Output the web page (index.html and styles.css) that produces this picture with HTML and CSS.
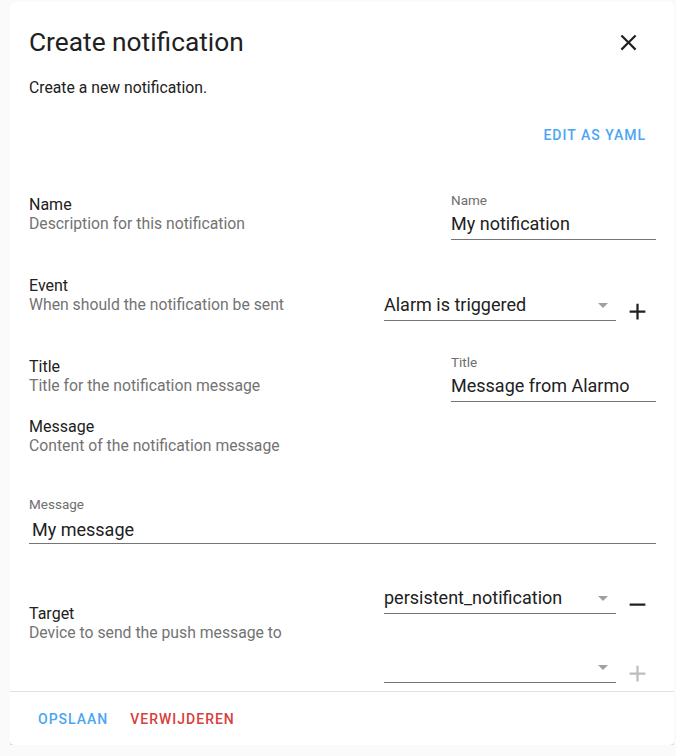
FILE: index.html
```html
<!DOCTYPE html>
<html lang="en">
<head>
  <meta charset="UTF-8">
  <title>Create notification</title>
  <link rel="stylesheet" href="styles.css">
</head>
<body>
<div class="dialog">
  <div class="dialog-header">
    <h2 class="dialog-title">Create notification</h2>
    <button class="icon-btn close-btn" aria-label="Close">
      <svg viewBox="0 0 24 24" width="27" height="27"><path d="M19,6.41L17.59,5L12,10.59L6.41,5L5,6.41L10.59,12L5,17.59L6.41,19L12,13.41L17.59,19L19,17.59L13.41,12L19,6.41Z"/></svg>
    </button>
  </div>

  <div class="dialog-body">
    <p class="intro">Create a new notification.</p>

    <div class="yaml-bar">
      <button class="text-btn primary">Edit as YAML</button>
    </div>

    <!-- Name -->
    <div class="setting-row">
      <div class="info">
        <div class="info-name">Name</div>
        <div class="info-desc">Description for this notification</div>
      </div>
      <div class="textfield">
        <span class="tf-label">Name</span>
        <span class="tf-value">My notification</span>
      </div>
    </div>

    <!-- Event -->
    <div class="setting-row event-row">
      <div class="info">
        <div class="info-name">Event</div>
        <div class="info-desc">When should the notification be sent</div>
      </div>
      <div class="select-line">
        <div class="select">
          <span class="select-value">Alarm is triggered</span>
          <span class="arrow"></span>
        </div>
        <span class="line-icon">
          <svg viewBox="0 0 24 24" width="27" height="27"><path d="M19,13H13V19H11V13H5V11H11V5H13V11H19V13Z"/></svg>
        </span>
      </div>
    </div>

    <!-- Title -->
    <div class="setting-row title-row">
      <div class="info">
        <div class="info-name">Title</div>
        <div class="info-desc">Title for the notification message</div>
      </div>
      <div class="textfield">
        <span class="tf-label">Title</span>
        <span class="tf-value">Message from Alarmo</span>
      </div>
    </div>

    <!-- Message -->
    <div class="setting-row message-row">
      <div class="info">
        <div class="info-name">Message</div>
        <div class="info-desc">Content of the notification message</div>
      </div>
    </div>

    <div class="textfield textarea">
      <span class="tf-label">Message</span>
      <span class="tf-value">My message</span>
    </div>

    <!-- Target -->
    <div class="setting-row target-row">
      <div class="info">
        <div class="info-name">Target</div>
        <div class="info-desc">Device to send the push message to</div>
      </div>
      <div class="select-list">
        <div class="select-line">
          <div class="select">
            <span class="select-value">persistent_notification</span>
            <span class="arrow"></span>
          </div>
          <span class="line-icon minus">
            <svg viewBox="0 0 24 24" width="27" height="27"><path d="M19,13H5V11H19V13Z"/></svg>
          </span>
        </div>
        <div class="select-line">
          <div class="select">
            <span class="select-value"></span>
            <span class="arrow"></span>
          </div>
          <span class="line-icon disabled">
            <svg viewBox="0 0 24 24" width="27" height="27"><path d="M19,13H13V19H11V13H5V11H11V5H13V11H19V13Z"/></svg>
          </span>
        </div>
      </div>
    </div>
  </div>

  <div class="dialog-footer">
    <button class="text-btn primary">Opslaan</button>
    <button class="text-btn danger">Verwijderen</button>
  </div>
</div>
</body>
</html>
```

FILE: styles.css
```css
html, body {
  background: #fafafa;
}

body {
  margin: 2px 2px 0 10px;
  font-family: Roboto, "Liberation Sans", sans-serif;
  color: #212121;
}

button {
  font-family: inherit;
  background: none;
  border: none;
  padding: 0;
  cursor: pointer;
}

.dialog {
  width: 664px;
  height: 743px;
  background: #fff;
  border-radius: 4px;
  box-shadow: 0 2px 2px rgba(0, 0, 0, 0.14), 0 1px 5px rgba(0, 0, 0, 0.12), 0 3px 1px -2px rgba(0, 0, 0, 0.2);
  display: flex;
  flex-direction: column;
  overflow: hidden;
}

.dialog-header {
  display: flex;
  align-items: center;
  height: 48px;
  padding: 16px 22px 0 19px;
}

.dialog-title {
  flex: 1;
  margin: 0;
  font-size: 26.3px;
  font-weight: 400;
  line-height: 32px;
  color: #212121;
}

.icon-btn {
  width: 48px;
  height: 48px;
  display: flex;
  align-items: center;
  justify-content: center;
}

.icon-btn svg {
  fill: #212121;
}

.dialog-body {
  flex: 1;
  padding: 0 18px 0 19px;
}

.intro {
  margin: 12px 0 0;
  font-size: 15.75px;
  line-height: 20px;
  color: #212121;
}

.yaml-bar {
  display: flex;
  justify-content: flex-end;
  margin-top: 19px;
  padding-right: 2px;
}

.text-btn {
  height: 36px;
  padding: 0 8px;
  font-size: 14px;
  font-weight: 500;
  letter-spacing: 1px;
  text-transform: uppercase;
}

.text-btn.primary {
  color: #4aa6f3;
}

.text-btn.danger {
  color: #d8403c;
}

/* settings rows */
.setting-row {
  display: flex;
  justify-content: space-between;
  align-items: flex-start;
  margin-top: 39px;
}

.info {
  margin-top: 3px;
}

.info-name {
  font-size: 16px;
  line-height: 20px;
  color: #212121;
}

.info-desc {
  font-size: 15.75px;
  line-height: 18px;
  color: #737373;
}

.event-row {
  margin-top: 35px;
}

.event-row .info {
  margin-top: 1px;
}

.event-row .select-line {
  margin-top: 6px;
}

.title-row {
  margin-top: 33px;
}

.message-row {
  margin-top: 14px;
}

.message-row .info {
  margin-top: 1px;
}

.target-row {
  margin-top: 30px;
}

.target-row .info {
  margin-top: 30px;
}

/* text fields */
.textfield {
  width: 205px;
  display: flex;
  flex-direction: column;
  padding-bottom: 3px;
  border-bottom: 1px solid #757575;
}

.tf-label {
  font-size: 13.5px;
  line-height: 16px;
  color: #6e6e6e;
}

.tf-value {
  margin-top: 4px;
  font-size: 18px;
  line-height: 24px;
  color: #212121;
}

.textarea {
  width: auto;
  margin-top: 41px;
  padding-bottom: 1px;
}

.textarea .tf-value {
  margin-top: 6px;
  padding-left: 3px;
}

/* selects */
.select-list {
  display: flex;
  flex-direction: column;
  gap: 29px;
}

.select-line {
  display: flex;
  align-items: flex-end;
}

.select {
  width: 232px;
  height: 40px;
  box-sizing: border-box;
  padding: 12px 0 3px;
  border-bottom: 1px solid #757575;
  display: flex;
  align-items: center;
}

.select-value {
  flex: 1;
  height: 24px;
  font-size: 18px;
  line-height: 24px;
  color: #212121;
}

.arrow {
  width: 0;
  height: 0;
  margin-right: 8px;
  border-left: 5px solid transparent;
  border-right: 5px solid transparent;
  border-top: 5px solid #a0a0a0;
}

.line-icon {
  width: 27px;
  height: 27px;
  margin: 0 5px -4px 8px;
}

.line-icon svg {
  fill: #212121;
}

.line-icon.disabled svg {
  fill: #bdbdbd;
}

/* footer */
.dialog-footer {
  height: 52px;
  padding: 1px 0 0 20px;
  border-top: 1px solid #e0e0e0;
  display: flex;
  align-items: center;
  gap: 6px;
}
```
